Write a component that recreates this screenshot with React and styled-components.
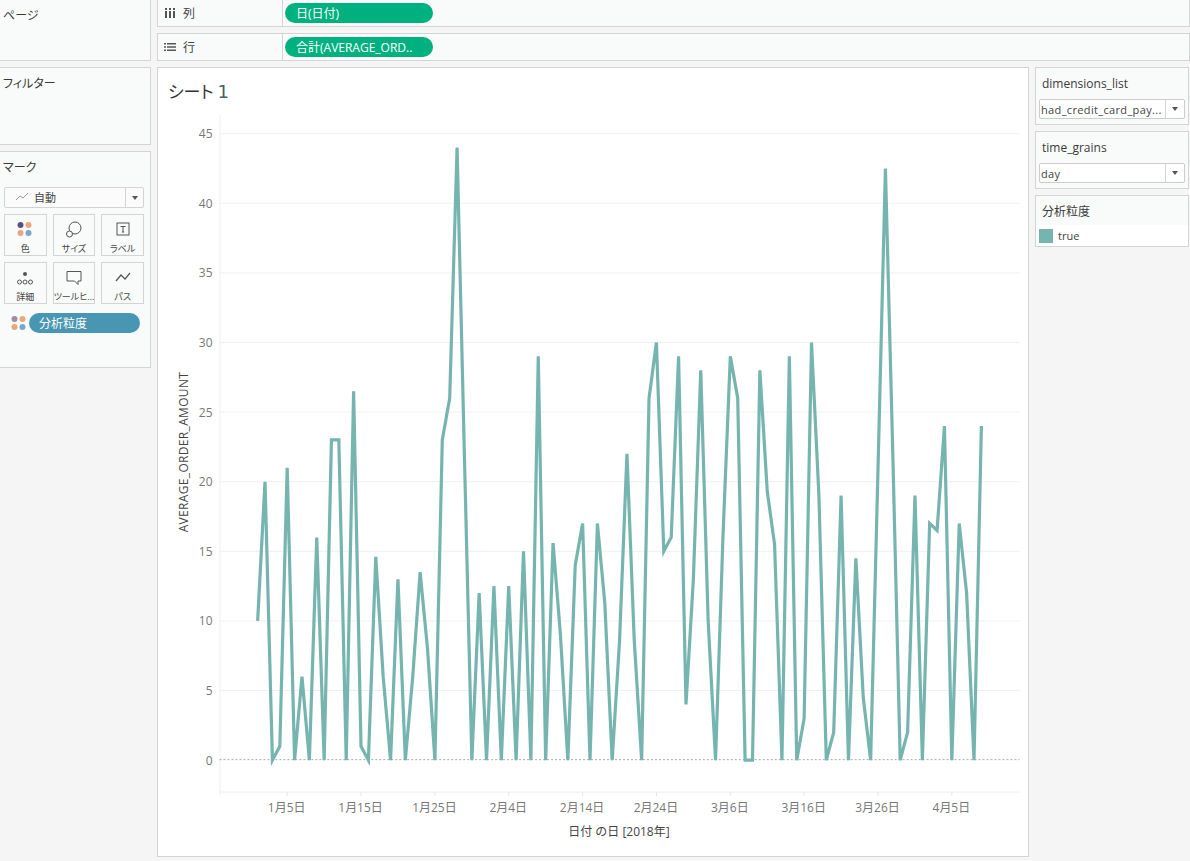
import React from 'react';
import styled, { createGlobalStyle } from 'styled-components';

const FONT = '"Open Sans", "Noto Sans CJK JP", sans-serif';
const TEAL = '#76b5af';

const GlobalStyle = createGlobalStyle`
  html, body {
    margin: 0;
    padding: 0;
    background: #f5f5f5;
    overflow: hidden;
  }
  body {
    font-family: ${FONT};
    color: #444;
  }
`;

const Page = styled.div`
  display: flex;
  gap: 6px;
  width: 1190px;
  height: 861px;
`;
const LeftColumn = styled.div`
  display: flex;
  flex-direction: column;
  gap: 6px;
  width: 151px;
  flex: none;
`;
const Card = styled.div`
  box-sizing: border-box;
  height: ${props => props.$height}px;
  background: #f9fafa;
  border: solid 1px #d4d4d4;
  border-left: ${props => (props.$flushLeft ? 'none' : 'solid 1px #d4d4d4')};
  border-top: ${props => (props.$flushTop ? 'none' : 'solid 1px #d4d4d4')};
`;
const CardTitle = styled.div`
  font-size: 12px;
  line-height: 16px;
  padding: ${props => props.$pad || '8px 0 0 3px'};
  color: #3a3a3a;
  font-feature-settings: "palt";
`;
const MarkType = styled.div`
  box-sizing: border-box;
  display: flex;
  align-items: center;
  height: 21px;
  margin: 11px 6px 6px 4px;
  background: #fbfbfb;
  border: solid 1px #d4d4d4;
  border-radius: 2px;
  font-size: 11px;
  span {
    flex: 1;
    display: flex;
    align-items: center;
    gap: 5px;
    padding: 0 0 1px 10px;
  }
`;
const Caret = styled.div`
  flex: none;
  display: flex;
  align-items: center;
  justify-content: center;
  align-self: stretch;
  width: ${props => props.$width}px;
  border-left: solid 1px #d4d4d4;
  &:after {
    content: '';
    border-left: 3.5px solid transparent;
    border-right: 3.5px solid transparent;
    border-top: 4px solid #555;
  }
`;
const MarkGrid = styled.div`
  display: grid;
  grid-template-columns: repeat(3, minmax(0, 1fr));
  gap: 6px;
  margin: 0 6px 0 4px;
`;
const MarkButton = styled.div`
  box-sizing: border-box;
  display: flex;
  flex-direction: column;
  align-items: center;
  height: 42px;
  border: solid 1px #d4d4d4;
  padding-top: 6px;
  font-size: 9px;
  line-height: 12px;
  color: #444;
  white-space: nowrap;
  font-feature-settings: "palt";
  svg {
    height: 17px;
    width: 20px;
    margin-bottom: 5px;
  }
`;
const ColorEncoding = styled.div`
  display: flex;
  align-items: center;
  gap: 2px;
  margin: 9px 10px 0 11px;
`;
const Pill = styled.div`
  box-sizing: border-box;
  display: flex;
  align-items: center;
  height: 20px;
  width: ${props => props.$width}px;
  border-radius: 10px;
  background: ${props => props.$color};
  color: #fff;
  font-size: 12px;
  padding-left: ${props => props.$pad}px;
  white-space: nowrap;
`;
const Main = styled.div`
  flex: 1;
  display: flex;
  flex-direction: column;
  gap: 6px;
  min-width: 0;
`;
const ShelfRow = styled.div`
  box-sizing: border-box;
  display: flex;
  align-items: center;
  height: ${props => props.$height}px;
  background: #f9fafa;
  border: solid 1px #d4d4d4;
  border-top: ${props => (props.$flushTop ? 'none' : 'solid 1px #d4d4d4')};
`;
const ShelfLabel = styled.div`
  box-sizing: border-box;
  display: flex;
  align-items: center;
  gap: 7px;
  width: 125px;
  height: 100%;
  padding-left: 6px;
  margin-right: 2px;
  border-right: solid 1px #d4d4d4;
  font-size: 12px;
  color: #444;
`;
const Lower = styled.div`
  flex: 1;
  display: flex;
  gap: 6px;
  min-height: 0;
  padding-bottom: 4px;
`;
const SheetPanel = styled.div`
  box-sizing: border-box;
  display: flex;
  flex-direction: column;
  width: 872px;
  background: #fff;
  border: solid 1px #d4d4d4;
  svg {
    display: block;
  }
`;
const SheetTitle = styled.div`
  height: 42px;
  box-sizing: border-box;
  padding: 12px 0 0 10px;
  font-size: 17px;
  line-height: 24px;
  color: #333;
  font-feature-settings: "palt";
  span {
    font-family: "DejaVu Sans", sans-serif;
    font-size: 18px;
    margin-left: 4px;
    color: #3f6464;
  }
`;
const RightColumn = styled.div`
  display: flex;
  flex-direction: column;
  gap: 6px;
  width: 154px;
  flex: none;
`;
const Dropdown = styled.div`
  box-sizing: border-box;
  display: flex;
  align-items: center;
  height: 20px;
  margin: 0 3px 0 3px;
  background: #fff;
  border: solid 1px #ccc;
  border-radius: 2px;
  font-size: 11px;
  color: #444;
  div:first-child {
    flex: 1;
    padding-left: 1px;
    letter-spacing: 0.35px;
  }
`;
const LegendRow = styled.div`
  display: flex;
  align-items: center;
  gap: 5px;
  height: 21px;
  padding-left: 3px;
  background: #fff;
  font-size: 11px;
  color: #444;
`;
const Swatch = styled.div`
  width: 14px;
  height: 14px;
  background: ${TEAL};
`;

const values = [
  10, 20, 0, 1, 21, 0, 6, 0, 16, 0, 23, 23, 0, 26.5, 1, 0, 14.6, 6, 0, 13, 0, 6, 13.5, 8, 0,
  23, 26, 44, 21.7, 0, 12, 0, 12.5, 0, 12.5, 0, 15, 0, 29, 0, 15.6, 9, 0, 14, 17, 0, 17, 11.3, 0,
  8.6, 22, 8.6, 0, 26, 30, 15, 16, 29, 4, 13, 28, 10, 0, 16, 29, 26, 0, 0, 28, 19.3, 15.5, 0, 29,
  0, 3, 30, 19, 0, 2, 19, 0, 14.5, 4.5, 0, 21, 42.5, 22, 0, 2, 19, 0, 17, 16.5, 24, 0, 17, 12, 0, 24
];
const dayX = i => 257.2 + i * 7.395;
const valueY = v => 761 - v * 13.94;
const linePoints = values.map((v, i) => `${dayX(i).toFixed(1)},${valueY(v).toFixed(1)}`).join(' ');
const yTicks = [0, 5, 10, 15, 20, 25, 30, 35, 40, 45];
const xTicks = [
  [4, '1月5日'], [14, '1月15日'], [24, '1月25日'], [34, '2月4日'], [44, '2月14日'],
  [54, '2月24日'], [64, '3月6日'], [74, '3月16日'], [84, '3月26日'], [94, '4月5日']
];

const Dots = ({ colors }) => (
  <svg width="16" height="17" viewBox="0 0 16 17">
    <circle cx="3.5" cy="4" r="3" fill={colors[0]} />
    <circle cx="11.5" cy="4" r="3" fill={colors[1]} />
    <circle cx="3.5" cy="12" r="3" fill={colors[2]} />
    <circle cx="11.5" cy="12" r="3" fill={colors[3]} />
  </svg>
);

const Chart = () => (
  <svg width="870" height="747" viewBox="158 110 870 747" fontFamily={FONT}>
    {yTicks.filter(t => t > 0).map(t => (
      <line key={t} x1="219" x2="1020" y1={valueY(t)} y2={valueY(t)} stroke="#f0f0f0" />
    ))}
    <line x1="219.5" x2="219.5" y1="115" y2="796" stroke="#efefef" />
    <line x1="219" x2="1020" y1="793" y2="793" stroke="#efefef" />
    <line x1="219" x2="1020" y1="760.5" y2="760.5" stroke="#aaa" strokeDasharray="2 2" />
    {yTicks.map(t => (
      <text key={t} x="212" y={valueY(t) + 4.5} textAnchor="end" fontSize="12" fill="#777">{t}</text>
    ))}
    {xTicks.map(([i, label]) => (
      <g key={label}>
        <line x1={dayX(i)} x2={dayX(i)} y1="793" y2="797" stroke="#e6e6e6" />
        <text x={dayX(i) - 0.5} y="813" textAnchor="middle" fontSize="12" fill="#777">{label}</text>
      </g>
    ))}
    <text x="619" y="837" textAnchor="middle" fontSize="12" fill="#444">日付 の日 [2018年]</text>
    <text
      transform="translate(187 452.5) rotate(-90)"
      textAnchor="middle"
      fontSize="12"
      letterSpacing="0.35"
      fill="#444"
    >
      AVERAGE_ORDER_AMOUNT
    </text>
    <polyline points={linePoints} fill="none" stroke={TEAL} strokeWidth="3.2" strokeLinejoin="miter" strokeMiterlimit="4" />
  </svg>
);

const App = () => (
  <Page>
    <GlobalStyle />
    <LeftColumn>
      <Card $height={61} $flushLeft $flushTop>
        <CardTitle>ページ</CardTitle>
      </Card>
      <Card $height={78} $flushLeft>
        <CardTitle>フィルター</CardTitle>
      </Card>
      <Card $height={217} $flushLeft>
        <CardTitle>マーク</CardTitle>
        <MarkType>
          <span>
            <svg width="14" height="10" viewBox="0 0 14 10">
              <polyline points="1,8 5,4 8,6 13,1" fill="none" stroke="#999" strokeWidth="1" />
            </svg>
            自動
          </span>
          <Caret $width={17} />
        </MarkType>
        <MarkGrid>
          <MarkButton>
            <Dots colors={['#5b4f7f', '#eda67d', '#eda67d', '#79a9c9']} />
            色
          </MarkButton>
          <MarkButton>
            <svg viewBox="0 0 20 17">
              <circle cx="11" cy="7" r="6" fill="none" stroke="#555" />
              <circle cx="5.5" cy="13" r="3" fill="#f9fafa" stroke="#555" />
            </svg>
            サイズ
          </MarkButton>
          <MarkButton>
            <svg viewBox="0 0 20 17">
              <rect x="4" y="2" width="12" height="12" fill="none" stroke="#555" />
              <path d="M7.5 5.5h5M10 5.5v5.5M8.8 11h2.4" fill="none" stroke="#555" />
            </svg>
            ラベル
          </MarkButton>
          <MarkButton>
            <svg viewBox="0 0 20 17">
              <circle cx="10" cy="5" r="2" fill="#555" />
              <circle cx="4.5" cy="13" r="2" fill="none" stroke="#555" />
              <circle cx="10" cy="13" r="2" fill="none" stroke="#555" />
              <circle cx="15.5" cy="13" r="2" fill="none" stroke="#555" />
            </svg>
            詳細
          </MarkButton>
          <MarkButton>
            <svg viewBox="0 0 20 17">
              <path d="M3 2.5h14v9.5h-3v3.5l-3.5-3.5H3z" fill="none" stroke="#555" />
            </svg>
            ツールヒ…
          </MarkButton>
          <MarkButton>
            <svg viewBox="0 0 20 17">
              <polyline points="3,12 8,6 12,10 17,4" fill="none" stroke="#555" strokeWidth="1.2" />
            </svg>
            パス
          </MarkButton>
        </MarkGrid>
        <ColorEncoding>
          <Dots colors={['#a08da0', '#eda67d', '#eda67d', '#79a9c4']} />
          <Pill $width={111} $color="#4996b2" $pad={10}>分析粒度</Pill>
        </ColorEncoding>
      </Card>
    </LeftColumn>
    <Main>
      <ShelfRow $height={27} $flushTop>
        <ShelfLabel>
          <svg width="12" height="12" viewBox="0 0 12 12">
            <path d="M1 4h2v7H1zM5 4h2v7H5zM9 4h2v7H9zM1 1h2v2H1zM5 1h2v2H5zM9 1h2v2H9z" fill="#555" />
          </svg>
          列
        </ShelfLabel>
        <Pill $width={148} $color="#00b180" $pad={11}>日(日付)</Pill>
      </ShelfRow>
      <ShelfRow $height={28}>
        <ShelfLabel>
          <svg width="12" height="12" viewBox="0 0 12 12">
            <path d="M0 2h2v1.5H0zM3 2h9v1.5H3zM0 5.2h2v1.5H0zM3 5.2h9v1.5H3zM0 8.4h2v1.5H0zM3 8.4h9v1.5H3z" fill="#555" />
          </svg>
          行
        </ShelfLabel>
        <Pill $width={148} $color="#00b180" $pad={11}>合計(AVERAGE_ORD..</Pill>
      </ShelfRow>
      <Lower>
        <SheetPanel>
          <SheetTitle>シート<span>1</span></SheetTitle>
          <Chart />
        </SheetPanel>
        <RightColumn>
          <Card $height={58}>
            <CardTitle $pad="8px 0 7px 6px">dimensions_list</CardTitle>
            <Dropdown>
              <div>had_credit_card_pay...</div>
              <Caret $width={18} />
            </Dropdown>
          </Card>
          <Card $height={58}>
            <CardTitle $pad="8px 0 7px 6px">time_grains</CardTitle>
            <Dropdown>
              <div>day</div>
              <Caret $width={18} />
            </Dropdown>
          </Card>
          <Card $height={52}>
            <CardTitle $pad="8px 0 5px 6px">分析粒度</CardTitle>
            <LegendRow>
              <Swatch />
              true
            </LegendRow>
          </Card>
        </RightColumn>
      </Lower>
    </Main>
  </Page>
);

export default App;
